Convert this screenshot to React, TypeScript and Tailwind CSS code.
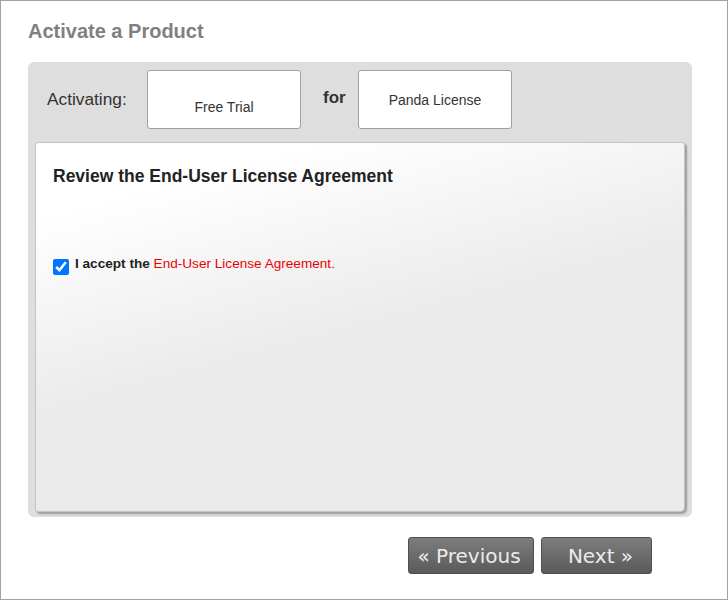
import React from "react";

export default function App() {
  return (
    <div className="w-[728px] h-[600px] border border-[#a3a3a3] bg-white box-border font-['Liberation_Sans',Arial,sans-serif]">
      <div className="pl-[27px] pt-[18px]">
        <h1 className="text-[20px] leading-[24px] font-bold text-[#808080]">Activate a Product</h1>

        <div className="mt-[19px] w-[664px] h-[455px] rounded-[6px] bg-[#dedede] pt-[8px] box-border">
          <div className="flex items-center h-[59px] pl-[19px]">
            <span className="text-[17.3px] text-[#333333] w-[80px] whitespace-nowrap">Activating:</span>
            <div className="ml-[20px] w-[154px] h-[59px] box-border bg-white border border-[#a0a0a0] rounded-[3px] flex items-end justify-center pb-[13px]">
              <span className="text-[14px] leading-[16px] text-[#333333]">Free Trial</span>
            </div>
            <span className="ml-[22px] text-[17px] font-bold text-[#333333] -mt-[4px] w-[24px]">for</span>
            <div className="ml-[11px] w-[154px] h-[59px] box-border bg-white border border-[#a0a0a0] rounded-[3px] flex items-center justify-center">
              <span className="text-[14px] leading-[16px] text-[#333333]">Panda License</span>
            </div>
          </div>

          <div className="mt-[13px] ml-[7px] w-[650px] h-[370px] box-border border border-[#c4c4c4] rounded-[3px] rounded-br-[5px] bg-[linear-gradient(165deg,#ffffff_14%,#ebebeb_50%)] shadow-[2px_2px_2px_#9c9c9c] px-[17px] pt-[22px]">
            <h2 className="text-[17.5px] leading-[22px] font-bold text-[#222222]">Review the End-User License Agreement</h2>
            <div className="mt-[72px] flex items-center">
              <input
                type="checkbox"
                defaultChecked
                className="m-0 w-[16px] h-[16px] accent-[#0075ff]"
              />
              <span className="ml-[6px] text-[13.6px] leading-[16px] -mt-[6px]">
                <span className="font-bold text-[#222222]">I accept the </span>
                <span className="text-[#ee0000]">End-User License Agreement.</span>
              </span>
            </div>
          </div>
        </div>

        <div className="mt-[20px] w-[664px] pr-[40px] box-border flex justify-end gap-[7px]">
          <button className="w-[126px] h-[37px] box-border rounded-[3px] border border-[#4f4f4f] bg-[linear-gradient(#7d7d7d,#5a5a5a)] text-[#ececec] text-[20px] leading-[24px] font-['DejaVu_Sans',sans-serif] pr-[4px]">
            « Previous
          </button>
          <button className="w-[111px] h-[37px] box-border rounded-[3px] border border-[#4f4f4f] bg-[linear-gradient(#7d7d7d,#5a5a5a)] text-[#ececec] text-[20px] leading-[24px] font-['DejaVu_Sans',sans-serif] pl-[8px]">
            Next »
          </button>
        </div>
      </div>
    </div>
  );
}
